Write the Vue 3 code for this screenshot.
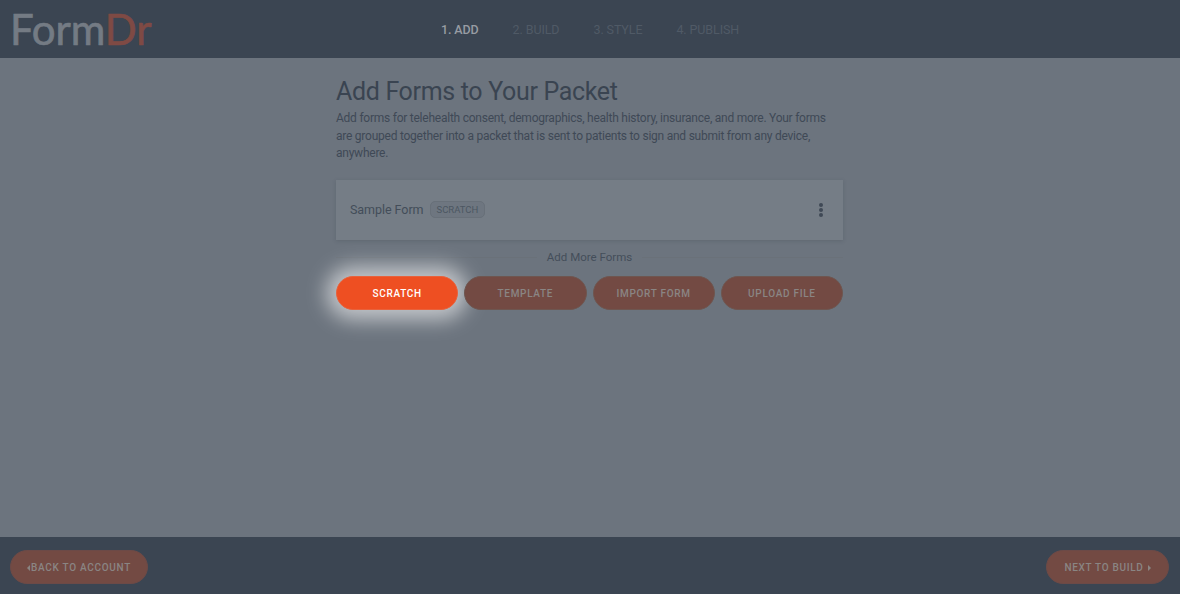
<script setup>
const steps = [
  { label: '1. ADD', active: true },
  { label: '2. BUILD', active: false },
  { label: '3. STYLE', active: false },
  { label: '4. PUBLISH', active: false }
]
const addButtons = ['SCRATCH', 'TEMPLATE', 'IMPORT FORM', 'UPLOAD FILE']
</script>

<template>
  <div class="page">
    <header class="top">
      <div class="logo">Form<span class="logo-dr">Dr</span></div>
      <nav class="steps">
        <span v-for="step in steps" :key="step.label" class="step" :class="{ active: step.active }">{{ step.label }}</span>
      </nav>
    </header>

    <main class="main">
      <section class="content">
        <h1 class="title">Add Forms to Your Packet</h1>
        <p class="intro">
          Add forms for telehealth consent, demographics, health history, insurance, and more. Your forms
          are grouped together into a packet that is sent to patients to sign and submit from any device,
          anywhere.
        </p>

        <div class="card">
          <div class="card-name">
            <span>Sample Form</span>
            <span class="tag">SCRATCH</span>
          </div>
          <svg class="dots" width="6" height="14" viewBox="0 0 6 14">
            <circle cx="3" cy="2" r="2" />
            <circle cx="3" cy="7" r="2" />
            <circle cx="3" cy="12" r="2" />
          </svg>
        </div>

        <div class="divider"><span>Add More Forms</span></div>

        <div class="add-row">
          <button
            v-for="(name, i) in addButtons"
            :key="name"
            class="pill"
            :class="{ hot: i === 0 }"
            type="button"
          >{{ name }}</button>
        </div>
      </section>
    </main>

    <footer class="bottom">
      <button class="pill back" type="button"><span class="arrow left"></span>BACK TO ACCOUNT</button>
      <button class="pill next" type="button">NEXT TO BUILD<span class="arrow right"></span></button>
    </footer>
  </div>
</template>

<style>
html, body {
  margin: 0;
  background: #6c747e;
}
</style>

<style scoped>
.page {
  height: 594px;
  display: flex;
  flex-direction: column;
  background: #6c747e;
  font-family: Roboto, "Noto Sans", sans-serif;
  overflow: hidden;
}

.top {
  height: 58px;
  flex: none;
  position: relative;
  display: flex;
  align-items: center;
  justify-content: center;
  background: #3b4552;
}

.logo {
  position: absolute;
  left: 10px;
  top: 4px;
  font-family: Lato, sans-serif;
  font-size: 42px;
  line-height: 50px;
  font-weight: 400;
  letter-spacing: -0.1px;
  color: #747b84;
  -webkit-text-stroke: 0.7px currentColor;
}

.logo-dr {
  color: #7f4a44;
}

.steps {
  display: flex;
  gap: 34px;
  font-size: 12.5px;
  letter-spacing: -0.1px;
}

.step {
  color: #505a66;
}

.step.active {
  color: #979ca3;
  font-weight: 500;
}

.main {
  flex: 1;
  display: flex;
  justify-content: center;
}

.content {
  width: 507px;
  margin-right: 1px;
  padding-top: 17px;
}

.title {
  margin: 0;
  font-size: 25px;
  line-height: 33px;
  font-weight: 400;
  letter-spacing: -0.33px;
  color: #3a4451;
}

.intro {
  margin: 2px 0 0;
  font-size: 12px;
  line-height: 17.5px;
  letter-spacing: -0.24px;
  color: #3f4956;
}

.card {
  height: 60px;
  margin-top: 17px;
  padding: 0 19px 0 14px;
  display: flex;
  align-items: center;
  justify-content: space-between;
  background: #757d86;
  box-shadow: 0 1px 4px rgba(50, 58, 68, 0.22);
}

.card-name {
  display: flex;
  align-items: center;
  gap: 6px;
  font-size: 12.5px;
  letter-spacing: -0.05px;
  color: #434d59;
}

.tag {
  padding: 0 6px;
  line-height: 15px;
  font-size: 9.5px;
  letter-spacing: 0;
  color: #4c5662;
  background: #6e7680;
  border: 1px solid #687079;
  border-radius: 5px;
}

.dots {
  fill: #3f4956;
}

.divider {
  display: flex;
  align-items: center;
  gap: 10px;
  margin-top: 9px;
  font-size: 11.5px;
  line-height: 17px;
  color: #444e5a;
}

.divider::before,
.divider::after {
  content: "";
  flex: 1;
  height: 1px;
  background: #6a7179;
}

.add-row {
  display: grid;
  grid-template-columns: repeat(4, 1fr);
  gap: 6px;
  margin-top: 10px;
}

.pill {
  height: 34px;
  padding: 1px 0 0;
  border: 1px solid #6e5650;
  border-radius: 17px;
  background: #734a43;
  color: #8a8583;
  font-family: inherit;
  font-size: 10px;
  font-weight: 500;
  letter-spacing: 0.7px;
}

.pill.hot {
  background: #ee4f22;
  border-color: #e8623c;
  color: #fff;
  box-shadow: 0 0 20px 10px rgba(255, 255, 255, 0.58);
}

.bottom {
  height: 57px;
  flex: none;
  display: flex;
  align-items: center;
  justify-content: space-between;
  padding: 2px 11px 0 10px;
  box-sizing: border-box;
  background: #3b4552;
}

.back {
  width: 138px;
  border-color: #6c4a47;
}

.next {
  width: 123px;
  border-color: #6c4a47;
}

.arrow {
  display: inline-block;
  width: 0;
  height: 0;
  border-top: 3px solid transparent;
  border-bottom: 3px solid transparent;
  vertical-align: 0;
}

.arrow.left {
  margin-right: 1px;
  border-right: 3px solid #8a8583;
}

.arrow.right {
  margin-left: 4px;
  border-left: 3px solid #8a8583;
}
</style>
